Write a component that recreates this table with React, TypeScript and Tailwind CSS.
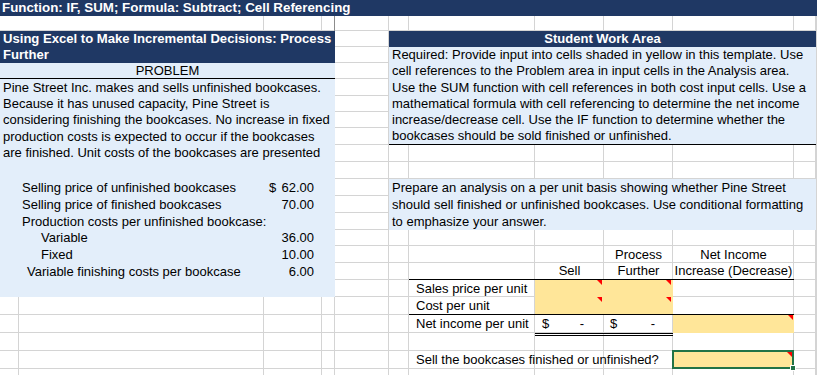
import React from "react";

const NAVY = "bg-[#1f3864]";

function Tri() {
  return (
    <svg width="5" height="5" viewBox="0 0 5 5" className="block shrink-0">
      <polygon points="0,0 5,0 5,5" fill="#ff0000" />
    </svg>
  );
}

export default function App() {
  const gridCells = Array.from({ length: 23 * 12 });
  const gridTpl =
    "grid grid-cols-[19px_245px_58px_13px_54px_20px_126px_69px_69px_121px_22px_1fr] grid-rows-[16px_15px_16px_16px_16px_17px_16px_16px_17px_17px_17px_17px_17px_17px_16px_17px_17px_17px_18px_18px_18px_18px_18px]";

  return (
    <div className="w-[817px] h-[375px] overflow-hidden bg-white font-['Liberation_Sans',Arial,sans-serif] text-[13px] text-black">
      <div className="grid">
        {/* gridline layer */}
        <div className={`${gridTpl} col-start-1 row-start-1`}>
          {gridCells.map((_, i) => (
            <div key={i} className="border-r border-b border-[#d4d4d4]" />
          ))}
        </div>

        {/* content layer */}
        <div className={`${gridTpl} col-start-1 row-start-1`}>
          {/* title */}
          <div className={`col-start-1 col-span-12 row-start-1 ${NAVY} text-white font-bold text-[13.35px] pl-[2px] leading-[16px] whitespace-nowrap`}>
            Function: IF, SUM; Formula: Subtract; Cell Referencing
          </div>
          {/* row 2 merged A:B */}
          <div className="col-start-1 col-span-2 row-start-2 bg-white border-r border-b border-[#d4d4d4]" />
          <div className="col-start-4 row-start-2 border-r border-[#8c8c8c]" />

          {/* left dark header */}
          <div className={`col-start-1 col-span-4 row-start-3 row-span-2 ${NAVY} text-white font-bold text-[13.1px] pl-[3px] leading-[16px] whitespace-nowrap`}>
            <div>Using Excel to Make Incremental Decisions: Process</div>
            <div>Further</div>
          </div>

          {/* left blue area */}
          <div className="col-start-1 col-span-4 row-start-5 row-span-14 bg-[#e3eefa]" />
          <div className="col-start-1 col-span-4 row-start-5 border-b border-black flex items-center justify-center leading-[16px]">
            PROBLEM
          </div>
          <div className="col-start-1 col-span-4 row-start-6 row-span-5 pl-[3px] pt-[1px] leading-[16.2px] whitespace-nowrap">
            <div>Pine Street Inc. makes and sells unfinished bookcases.</div>
            <div>Because it has unused capacity, Pine Street is</div>
            <div>considering finishing the bookcases. No increase in fixed</div>
            <div>production costs is expected to occur if the bookcases</div>
            <div>are finished. Unit costs of the bookcases are presented</div>
          </div>

          <div className="col-start-2 row-start-12 pl-[3px] flex items-center whitespace-nowrap">Selling price of unfinished bookcases</div>
          <div className="col-start-3 row-start-12 pl-[5px] pr-[8px] flex items-center justify-between"><span>$</span><span>62.00</span></div>
          <div className="col-start-2 row-start-13 pl-[3px] flex items-center whitespace-nowrap">Selling price of finished bookcases</div>
          <div className="col-start-3 row-start-13 pr-[8px] flex items-center justify-end">70.00</div>
          <div className="col-start-2 row-start-14 col-span-2 pl-[3px] flex items-center whitespace-nowrap">Production costs per unfinished bookcase:</div>
          <div className="col-start-2 row-start-15 pl-[22px] flex items-center whitespace-nowrap">Variable</div>
          <div className="col-start-3 row-start-15 pr-[8px] flex items-center justify-end">36.00</div>
          <div className="col-start-2 row-start-16 pl-[22px] flex items-center whitespace-nowrap">Fixed</div>
          <div className="col-start-3 row-start-16 pr-[8px] flex items-center justify-end">10.00</div>
          <div className="col-start-2 row-start-17 pl-[8px] flex items-center whitespace-nowrap">Variable finishing costs per bookcase</div>
          <div className="col-start-3 row-start-17 pr-[8px] flex items-center justify-end">6.00</div>

          {/* right dark header */}
          <div className={`col-start-6 col-span-6 row-start-3 ${NAVY} text-white font-bold flex items-center justify-center leading-[16px]`}>
            Student Work Area
          </div>
          <div className="col-start-6 col-span-6 row-start-4 row-span-6 bg-[#e3eefa] border-b border-black pl-[3px] leading-[16.3px] whitespace-nowrap">
            <div>Required: Provide input into cells shaded in yellow in this template. Use</div>
            <div>cell references to the Problem area in input cells in the Analysis area.</div>
            <div>Use the SUM function with cell references in both cost input cells. Use a</div>
            <div>mathematical formula with cell referencing to determine the net income</div>
            <div>increase/decrease cell. Use the IF function to determine whether the</div>
            <div>bookcases should be sold finished or unfinished.</div>
          </div>

          <div className="col-start-6 col-span-6 row-start-12 row-span-3 bg-[#e3eefa] pl-[3px] leading-[17px] whitespace-nowrap">
            <div>Prepare an analysis on a per unit basis showing whether Pine Street</div>
            <div>should sell finished or unfinished bookcases. Use conditional formatting</div>
            <div>to emphasize your answer.</div>
          </div>

          {/* analysis table headers */}
          <div className="col-start-9 row-start-16 flex items-end justify-center leading-[16px]">Process</div>
          <div className="col-start-10 row-start-16 flex items-end justify-center leading-[16px]">Net Income</div>
          <div className="col-start-7 row-start-17 border-b border-black" />
          <div className="col-start-8 row-start-17 border-b border-black flex items-center justify-center leading-[16px]">Sell</div>
          <div className="col-start-9 row-start-17 border-b border-black flex items-center justify-center leading-[16px]">Further</div>
          <div className="col-start-10 row-start-17 border-b border-black flex items-center justify-center leading-[16px] whitespace-nowrap">Increase (Decrease)</div>

          <div className="col-start-7 row-start-18 pl-[7px] flex items-center whitespace-nowrap">Sales price per unit</div>
          <div className="col-start-8 row-start-18 bg-[#ffe699] flex justify-end pr-[2px]"><Tri /></div>
          <div className="col-start-9 row-start-18 bg-[#ffe699] flex justify-end pr-[2px]"><Tri /></div>

          <div className="col-start-7 row-start-19 pl-[7px] flex items-center whitespace-nowrap border-b border-black">Cost per unit</div>
          <div className="col-start-8 row-start-19 bg-[#ffe699] flex justify-end pr-[2px] border-b border-black"><Tri /></div>
          <div className="col-start-9 row-start-19 bg-[#ffe699] flex justify-end pr-[2px] border-b border-black"><Tri /></div>
          <div className="col-start-10 row-start-19 border-b border-black" />

          <div className="col-start-7 row-start-20 pl-[7px] flex items-center whitespace-nowrap">Net income per unit</div>
          <div className="col-start-8 row-start-20 pl-[7px] pr-[20px] flex items-center justify-between"><span>$</span><span>-</span></div>
          <div className="col-start-9 row-start-20 pl-[6px] pr-[18px] flex items-center justify-between"><span>$</span><span>-</span></div>
          <div className="col-start-10 row-start-20 bg-[#ffe699] flex justify-end pr-[1px]"><Tri /></div>

          <div className="col-start-8 col-span-2 row-start-21 border-t-[3px] border-double border-black" />

          <div className="col-start-7 col-span-3 row-start-22 pl-[7px] flex items-center whitespace-nowrap">Sell the bookcases finished or unfinished?</div>
          <div className="col-start-10 row-start-22 relative -ml-[1px] -mt-[1px] border-2 border-[#217346] bg-[#ffe699] flex justify-end">
            <Tri />
            <div className="absolute -right-[4px] -bottom-[4px] w-[6px] h-[6px] bg-[#217346] border border-white" />
          </div>
        </div>
      </div>
    </div>
  );
}
